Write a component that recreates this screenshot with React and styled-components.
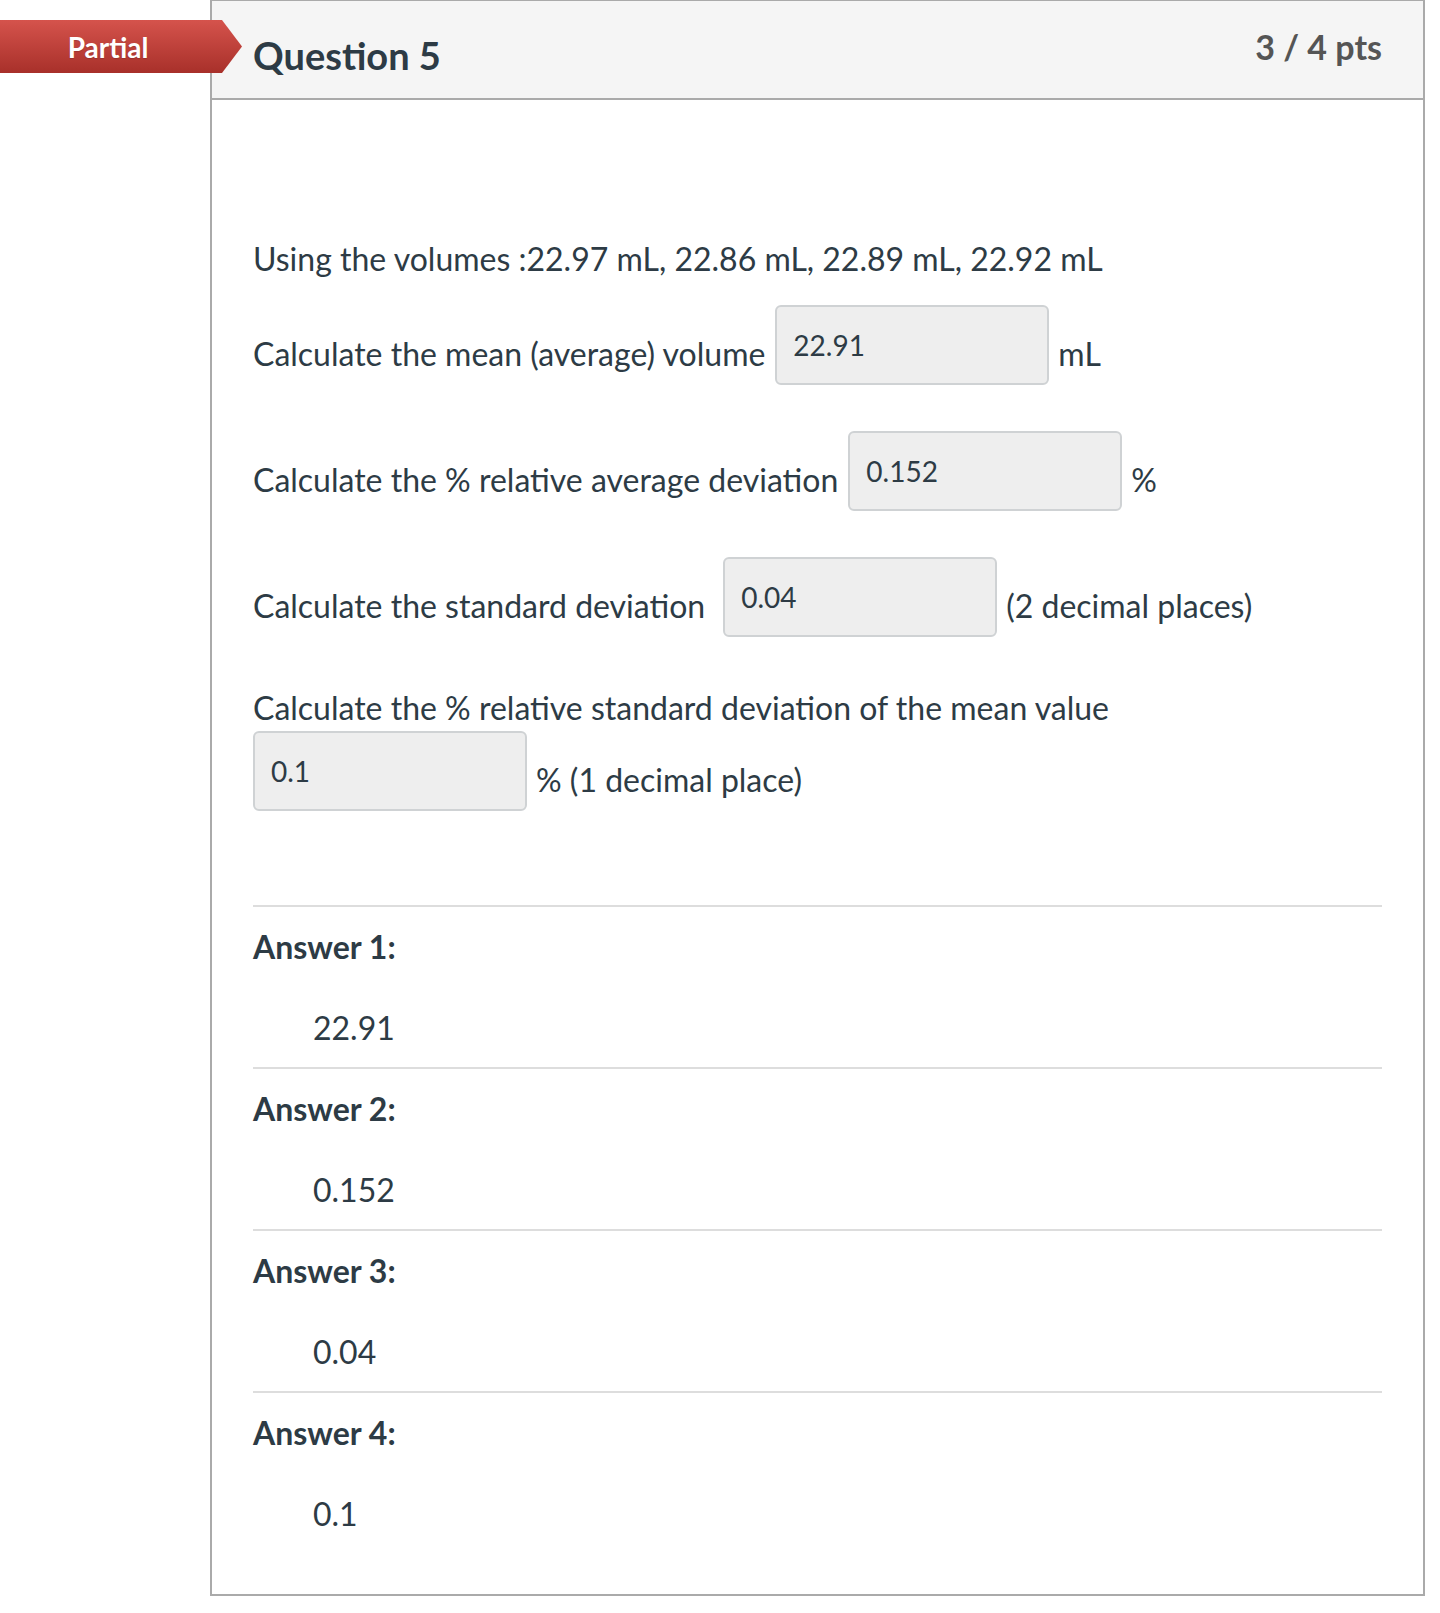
import React from "react";
import styled, { createGlobalStyle } from "styled-components";

const GlobalStyle = createGlobalStyle`
  body {
    margin: 0;
    background: #fff;
    font-family: Lato, "Open Sans", sans-serif;
    color: #2d3b45;
  }
`;

const questions = [
  { label: "Calculate the mean (average) volume", value: "22.91", unit: "mL", top: 27 },
  { label: "Calculate the % relative average deviation", value: "0.152", unit: "%", top: 46 },
  { label: "Calculate the standard deviation", value: "0.04", unit: "(2 decimal places)", top: 46, labelGap: 18 },
];

const answers = ["22.91", "0.152", "0.04", "0.1"];

const App = () => {
  return (
    <>
      <GlobalStyle />
      <Page>
        <Ribbon>Partial</Ribbon>
        <Card>
          <Header>
            <Title>Question 5</Title>
            <Points>3 / 4 pts</Points>
          </Header>
          <Body>
            <Text>Using the volumes :22.97 mL, 22.86 mL, 22.89 mL, 22.92 mL</Text>
            {questions.map((q) => (
              <Row key={q.label} $top={q.top}>
                <Label $gap={q.labelGap}>{q.label}</Label>
                <Field readOnly value={q.value} />
                <Label>{q.unit}</Label>
              </Row>
            ))}
            <Text $top={51}>Calculate the % relative standard deviation of the mean value</Text>
            <Row $top={4}>
              <Field readOnly value="0.1" />
              <Label>% (1 decimal place)</Label>
            </Row>
            <Answers>
              {answers.map((a, i) => (
                <Answer key={i}>
                  <AnswerLabel>Answer {i + 1}:</AnswerLabel>
                  <AnswerValue>{a}</AnswerValue>
                </Answer>
              ))}
            </Answers>
          </Body>
        </Card>
      </Page>
    </>
  );
};

const Page = styled.div`
  position: relative;
  width: 1440px;
  padding: 0 15px 18px 210px;
  box-sizing: border-box;
`;

const Ribbon = styled.div`
  position: absolute;
  top: 20px;
  left: 0;
  width: 242px;
  height: 53px;
  box-sizing: border-box;
  padding-right: 26px;
  display: flex;
  align-items: center;
  justify-content: center;
  background: linear-gradient(#d5534c, #a8302a);
  clip-path: polygon(0 0, 222px 0, 242px 50%, 222px 100%, 0 100%);
  color: #fff;
  font-size: 28px;
  font-weight: 700;
  z-index: 2;
  text-shadow: 0 1px 1px rgba(0, 0, 0, 0.15);
`;

const Card = styled.div`
  border: 2px solid #aaaaaa;
  border-top-width: 1px;
  background: #fff;
`;

const Header = styled.div`
  height: 97px;
  background: #f5f5f5;
  border-bottom: 2px solid #aaaaaa;
  padding: 0 41px;
  display: flex;
  justify-content: space-between;
  align-items: flex-start;
`;

const Title = styled.h2`
  margin: 35px 0 0;
  font-size: 38px;
  font-weight: 700;
  line-height: 1;
  color: #2d3b45;
`;

const Points = styled.div`
  margin-top: 29px;
  font-size: 34px;
  font-weight: 700;
  line-height: 1;
  color: #555;
`;

const Body = styled.div`
  padding: 139px 41px 41px;
`;

const Text = styled.p`
  margin: ${(p) => p.$top || 0}px 0 0;
  font-size: 32px;
  line-height: 39px;
`;

const Row = styled.div`
  display: flex;
  align-items: center;
  margin-top: ${(p) => p.$top}px;
`;

const Label = styled.span`
  font-size: 32px;
  line-height: 39px;
  margin-top: 17px;
  margin-right: ${(p) => p.$gap || 10}px;
  white-space: nowrap;
`;

const Field = styled.input`
  width: 274px;
  height: 80px;
  box-sizing: border-box;
  margin-right: 9px;
  padding: 0 16px;
  border: 2px solid #cfd2d4;
  border-radius: 6px;
  background: #eeeeee;
  font-family: Lato, "Open Sans", sans-serif;
  font-size: 28px;
  color: #2d3b45;
  outline: none;
`;

const Answers = styled.div`
  margin-top: 94px;
`;

const Answer = styled.div`
  border-top: 2px solid #dddddd;
  padding: 20px 0;
`;

const AnswerLabel = styled.div`
  font-size: 32px;
  line-height: 39px;
  font-weight: 700;
`;

const AnswerValue = styled.div`
  margin-top: 42px;
  padding-left: 60px;
  font-size: 32px;
  line-height: 39px;
`;

export default App;
